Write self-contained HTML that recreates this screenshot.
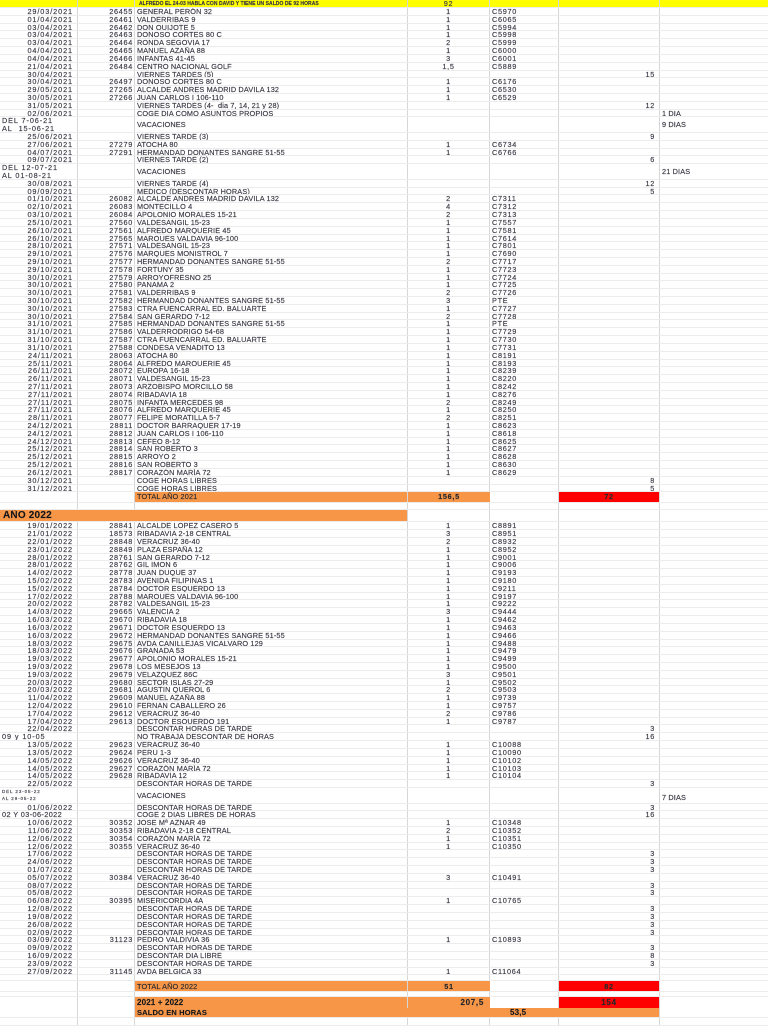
<!DOCTYPE html>
<html><head><meta charset="utf-8">
<style>
*{margin:0;padding:0;box-sizing:border-box}
body{width:768px;height:1024px;overflow:hidden;background:#fff;font-family:"Liberation Sans",sans-serif;color:#383844;font-size:7.3px}
.r{display:grid;grid-template-columns:78px 57px 273px 82px 69px 101px 108px;height:7.82px;line-height:7.82px;border-bottom:1px solid #ececec}
.r>x{display:block;border-right:1px solid #d6d6d6;white-space:nowrap;overflow:hidden;letter-spacing:.15px;-webkit-text-stroke:.15px #383844}
.r>x:nth-child(1){text-align:right;padding-right:4px;letter-spacing:.9px}
.r>x:nth-child(2){text-align:right;padding-right:1px;letter-spacing:.7px}
.r>x:nth-child(3){padding-left:2px}
.r>x:nth-child(4){text-align:center;letter-spacing:.7px}
.r>x:nth-child(5){padding-left:2px;letter-spacing:.7px}
.r>x:nth-child(6){text-align:right;padding-right:4px;letter-spacing:.7px}
.r>x:nth-child(7){padding-left:2px;border-right:none}
.d{height:15.6px;line-height:15.6px}
.d>x:nth-child(1){text-align:left!important;line-height:7.5px;padding-left:2px!important}
.sm>x:nth-child(1){font-size:4.5px;line-height:7.5px}
.o{background:#f79646!important;color:#222}
.rd{background:#ff0000!important;color:#222}
.bd{font-weight:bold}
</style></head><body>
<div class="r" style="height:8px;line-height:8px;background:#ffff00"><x></x><x></x><x style="font-size:5px;font-weight:bold;letter-spacing:.05px;padding-left:4px">ALFREDO EL 24-03 HABLA CON DAVID Y TIENE UN SALDO DE 92 HORAS</x><x>92</x><x></x><x></x><x></x></div>
<div class="r"><x>29/03/2021</x><x>26455</x><x>GENERAL PERÓN 32</x><x>1</x><x>C5970</x><x></x><x></x></div>
<div class="r"><x>01/04/2021</x><x>26461</x><x>VALDERRIBAS 9</x><x>1</x><x>C6065</x><x></x><x></x></div>
<div class="r"><x>03/04/2021</x><x>26462</x><x>DON QUIJOTE 5</x><x>1</x><x>C5994</x><x></x><x></x></div>
<div class="r"><x>03/04/2021</x><x>26463</x><x>DONOSO CORTES 80 C</x><x>1</x><x>C5998</x><x></x><x></x></div>
<div class="r"><x>03/04/2021</x><x>26464</x><x>RONDA SEGOVIA 17</x><x>2</x><x>C5999</x><x></x><x></x></div>
<div class="r"><x>04/04/2021</x><x>26465</x><x>MANUEL AZAÑA 88</x><x>1</x><x>C6000</x><x></x><x></x></div>
<div class="r"><x>04/04/2021</x><x>26466</x><x>INFANTAS 41-45</x><x>3</x><x>C6001</x><x></x><x></x></div>
<div class="r"><x>21/04/2021</x><x>26484</x><x>CENTRO NACIONAL GOLF</x><x>1,5</x><x>C5889</x><x></x><x></x></div>
<div class="r"><x>30/04/2021</x><x></x><x>VIERNES TARDES (5)</x><x></x><x></x><x>15</x><x></x></div>
<div class="r"><x>30/04/2021</x><x>26497</x><x>DONOSO CORTES 80 C</x><x>1</x><x>C6176</x><x></x><x></x></div>
<div class="r"><x>29/05/2021</x><x>27265</x><x>ALCALDE ANDRES MADRID DAVILA 132</x><x>1</x><x>C6530</x><x></x><x></x></div>
<div class="r"><x>30/05/2021</x><x>27266</x><x>JUAN CARLOS I 106-110</x><x>1</x><x>C6529</x><x></x><x></x></div>
<div class="r"><x>31/05/2021</x><x></x><x>VIERNES TARDES (4-&nbsp; dia 7, 14, 21 y 28)</x><x></x><x></x><x>12</x><x></x></div>
<div class="r"><x>02/06/2021</x><x></x><x>COGE DIA COMO ASUNTOS PROPIOS</x><x></x><x></x><x></x><x>1 DIA</x></div>
<div class="r d"><x>DEL 7-06-21<br>AL&nbsp; 15-06-21</x><x></x><x>VACACIONES</x><x></x><x></x><x></x><x>9 DIAS</x></div>
<div class="r"><x>25/06/2021</x><x></x><x>VIERNES TARDE (3)</x><x></x><x></x><x>9</x><x></x></div>
<div class="r"><x>27/06/2021</x><x>27279</x><x>ATOCHA 80</x><x>1</x><x>C6734</x><x></x><x></x></div>
<div class="r"><x>04/07/2021</x><x>27291</x><x>HERMANDAD DONANTES SANGRE 51-55</x><x>1</x><x>C6766</x><x></x><x></x></div>
<div class="r"><x>09/07/2021</x><x></x><x>VIERNES TARDE (2)</x><x></x><x></x><x>6</x><x></x></div>
<div class="r d"><x>DEL 12-07-21<br>AL 01-08-21</x><x></x><x>VACACIONES</x><x></x><x></x><x></x><x>21 DIAS</x></div>
<div class="r"><x>30/08/2021</x><x></x><x>VIERNES TARDE (4)</x><x></x><x></x><x>12</x><x></x></div>
<div class="r"><x>09/09/2021</x><x></x><x>MEDICO (DESCONTAR HORAS)</x><x></x><x></x><x>5</x><x></x></div>
<div class="r"><x>01/10/2021</x><x>26082</x><x>ALCALDE ANDRES MADRID DAVILA 132</x><x>2</x><x>C7311</x><x></x><x></x></div>
<div class="r"><x>02/10/2021</x><x>26083</x><x>MONTECILLO 4</x><x>4</x><x>C7312</x><x></x><x></x></div>
<div class="r"><x>03/10/2021</x><x>26084</x><x>APOLONIO MORALES 15-21</x><x>2</x><x>C7313</x><x></x><x></x></div>
<div class="r"><x>25/10/2021</x><x>27560</x><x>VALDESANGIL 15-23</x><x>1</x><x>C7557</x><x></x><x></x></div>
<div class="r"><x>26/10/2021</x><x>27561</x><x>ALFREDO MARQUERIE 45</x><x>1</x><x>C7581</x><x></x><x></x></div>
<div class="r"><x>26/10/2021</x><x>27565</x><x>MARQUES VALDAVIA 96-100</x><x>1</x><x>C7614</x><x></x><x></x></div>
<div class="r"><x>28/10/2021</x><x>27571</x><x>VALDESANGIL 15-23</x><x>1</x><x>C7801</x><x></x><x></x></div>
<div class="r"><x>29/10/2021</x><x>27576</x><x>MARQUES MONISTROL 7</x><x>1</x><x>C7690</x><x></x><x></x></div>
<div class="r"><x>29/10/2021</x><x>27577</x><x>HERMANDAD DONANTES SANGRE 51-55</x><x>2</x><x>C7717</x><x></x><x></x></div>
<div class="r"><x>29/10/2021</x><x>27578</x><x>FORTUNY 35</x><x>1</x><x>C7723</x><x></x><x></x></div>
<div class="r"><x>30/10/2021</x><x>27579</x><x>ARROYOFRESNO 25</x><x>1</x><x>C7724</x><x></x><x></x></div>
<div class="r"><x>30/10/2021</x><x>27580</x><x>PANAMA 2</x><x>1</x><x>C7725</x><x></x><x></x></div>
<div class="r"><x>30/10/2021</x><x>27581</x><x>VALDERRIBAS 9</x><x>2</x><x>C7726</x><x></x><x></x></div>
<div class="r"><x>30/10/2021</x><x>27582</x><x>HERMANDAD DONANTES SANGRE 51-55</x><x>3</x><x>PTE</x><x></x><x></x></div>
<div class="r"><x>30/10/2021</x><x>27583</x><x>CTRA FUENCARRAL ED. BALUARTE</x><x>1</x><x>C7727</x><x></x><x></x></div>
<div class="r"><x>30/10/2021</x><x>27584</x><x>SAN GERARDO 7-12</x><x>2</x><x>C7728</x><x></x><x></x></div>
<div class="r"><x>31/10/2021</x><x>27585</x><x>HERMANDAD DONANTES SANGRE 51-55</x><x>1</x><x>PTE</x><x></x><x></x></div>
<div class="r"><x>31/10/2021</x><x>27586</x><x>VALDERRODRIGO 54-68</x><x>1</x><x>C7729</x><x></x><x></x></div>
<div class="r"><x>31/10/2021</x><x>27587</x><x>CTRA FUENCARRAL ED. BALUARTE</x><x>1</x><x>C7730</x><x></x><x></x></div>
<div class="r"><x>31/10/2021</x><x>27588</x><x>CONDESA VENADITO 13</x><x>1</x><x>C7731</x><x></x><x></x></div>
<div class="r"><x>24/11/2021</x><x>28063</x><x>ATOCHA 80</x><x>1</x><x>C8191</x><x></x><x></x></div>
<div class="r"><x>25/11/2021</x><x>28064</x><x>ALFREDO MARQUERIE 45</x><x>1</x><x>C8193</x><x></x><x></x></div>
<div class="r"><x>26/11/2021</x><x>28072</x><x>EUROPA 16-18</x><x>1</x><x>C8239</x><x></x><x></x></div>
<div class="r"><x>26/11/2021</x><x>28071</x><x>VALDESANGIL 15-23</x><x>1</x><x>C8220</x><x></x><x></x></div>
<div class="r"><x>27/11/2021</x><x>28073</x><x>ARZOBISPO MORCILLO 58</x><x>1</x><x>C8242</x><x></x><x></x></div>
<div class="r"><x>27/11/2021</x><x>28074</x><x>RIBADAVIA 18</x><x>1</x><x>C8276</x><x></x><x></x></div>
<div class="r"><x>27/11/2021</x><x>28075</x><x>INFANTA MERCEDES 98</x><x>2</x><x>C8249</x><x></x><x></x></div>
<div class="r"><x>27/11/2021</x><x>28076</x><x>ALFREDO MARQUERIE 45</x><x>1</x><x>C8250</x><x></x><x></x></div>
<div class="r"><x>28/11/2021</x><x>28077</x><x>FELIPE MORATILLA 5-7</x><x>2</x><x>C8251</x><x></x><x></x></div>
<div class="r"><x>24/12/2021</x><x>28811</x><x>DOCTOR BARRAQUER 17-19</x><x>1</x><x>C8623</x><x></x><x></x></div>
<div class="r"><x>24/12/2021</x><x>28812</x><x>JUAN CARLOS I 106-110</x><x>1</x><x>C8618</x><x></x><x></x></div>
<div class="r"><x>24/12/2021</x><x>28813</x><x>CEFEO 8-12</x><x>1</x><x>C8625</x><x></x><x></x></div>
<div class="r"><x>25/12/2021</x><x>28814</x><x>SAN ROBERTO 3</x><x>1</x><x>C8627</x><x></x><x></x></div>
<div class="r"><x>25/12/2021</x><x>28815</x><x>ARROYO 2</x><x>1</x><x>C8628</x><x></x><x></x></div>
<div class="r"><x>25/12/2021</x><x>28816</x><x>SAN ROBERTO 3</x><x>1</x><x>C8630</x><x></x><x></x></div>
<div class="r"><x>26/12/2021</x><x>28817</x><x>CORAZÓN MARÍA 72</x><x>1</x><x>C8629</x><x></x><x></x></div>
<div class="r"><x>30/12/2021</x><x></x><x>COGE HORAS LIBRES</x><x></x><x></x><x>8</x><x></x></div>
<div class="r"><x>31/12/2021</x><x></x><x>COGE HORAS LIBRES</x><x></x><x></x><x>5</x><x></x></div>
<div class="r" style="height:11px;line-height:10px"><x></x><x></x><x class="o">TOTAL AÑO 2021</x><x class="o bd" style="border-right:none">156,5</x><x></x><x class="rd bd" style="text-align:center;padding:0">72</x><x></x></div>
<div class="r" style="height:7px"><x></x><x></x><x></x><x></x><x></x><x></x><x></x></div>
<div class="r" style="grid-template-columns:408px 82px 69px 101px 108px;height:12px;line-height:12px"><x class="o bd" style="text-align:left;padding-left:3px;font-size:10px;letter-spacing:.2px;color:#111">AÑO 2022</x><x></x><x></x><x></x><x style="border-right:none"></x></div>
<div class="r"><x>19/01/2022</x><x>28841</x><x>ALCALDE LOPEZ CASERO 5</x><x>1</x><x>C8891</x><x></x><x></x></div>
<div class="r"><x>21/01/2022</x><x>18573</x><x>RIBADAVIA 2-18 CENTRAL</x><x>3</x><x>C8951</x><x></x><x></x></div>
<div class="r"><x>22/01/2022</x><x>28848</x><x>VERACRUZ 36-40</x><x>2</x><x>C8932</x><x></x><x></x></div>
<div class="r"><x>23/01/2022</x><x>28849</x><x>PLAZA ESPAÑA 12</x><x>1</x><x>C8952</x><x></x><x></x></div>
<div class="r"><x>28/01/2022</x><x>28761</x><x>SAN GERARDO 7-12</x><x>1</x><x>C9001</x><x></x><x></x></div>
<div class="r"><x>28/01/2022</x><x>28762</x><x>GIL IMON 6</x><x>1</x><x>C9006</x><x></x><x></x></div>
<div class="r"><x>14/02/2022</x><x>28778</x><x>JUAN DUQUE 37</x><x>1</x><x>C9193</x><x></x><x></x></div>
<div class="r"><x>15/02/2022</x><x>28783</x><x>AVENIDA FILIPINAS 1</x><x>1</x><x>C9180</x><x></x><x></x></div>
<div class="r"><x>15/02/2022</x><x>28784</x><x>DOCTOR ESQUERDO 13</x><x>1</x><x>C9211</x><x></x><x></x></div>
<div class="r"><x>17/02/2022</x><x>28788</x><x>MARQUES VALDAVIA 96-100</x><x>1</x><x>C9197</x><x></x><x></x></div>
<div class="r"><x>20/02/2022</x><x>28782</x><x>VALDESANGIL 15-23</x><x>1</x><x>C9222</x><x></x><x></x></div>
<div class="r"><x>14/03/2022</x><x>29665</x><x>VALENCIA 2</x><x>3</x><x>C9444</x><x></x><x></x></div>
<div class="r"><x>16/03/2022</x><x>29670</x><x>RIBADAVIA 18</x><x>1</x><x>C9462</x><x></x><x></x></div>
<div class="r"><x>16/03/2022</x><x>29671</x><x>DOCTOR ESQUERDO 13</x><x>1</x><x>C9463</x><x></x><x></x></div>
<div class="r"><x>16/03/2022</x><x>29672</x><x>HERMANDAD DONANTES SANGRE 51-55</x><x>1</x><x>C9466</x><x></x><x></x></div>
<div class="r"><x>18/03/2022</x><x>29675</x><x>AVDA CANILLEJAS VICALVARO 129</x><x>1</x><x>C9488</x><x></x><x></x></div>
<div class="r"><x>18/03/2022</x><x>29676</x><x>GRANADA 53</x><x>1</x><x>C9479</x><x></x><x></x></div>
<div class="r"><x>19/03/2022</x><x>29677</x><x>APOLONIO MORALES 15-21</x><x>1</x><x>C9499</x><x></x><x></x></div>
<div class="r"><x>19/03/2022</x><x>29678</x><x>LOS MESEJOS 13</x><x>1</x><x>C9500</x><x></x><x></x></div>
<div class="r"><x>19/03/2022</x><x>29679</x><x>VELAZQUEZ 86C</x><x>3</x><x>C9501</x><x></x><x></x></div>
<div class="r"><x>20/03/2022</x><x>29680</x><x>SECTOR ISLAS 27-29</x><x>1</x><x>C9502</x><x></x><x></x></div>
<div class="r"><x>20/03/2022</x><x>29681</x><x>AGUSTIN QUEROL 6</x><x>2</x><x>C9503</x><x></x><x></x></div>
<div class="r"><x>11/04/2022</x><x>29609</x><x>MANUEL AZAÑA 88</x><x>1</x><x>C9739</x><x></x><x></x></div>
<div class="r"><x>12/04/2022</x><x>29610</x><x>FERNAN CABALLERO 26</x><x>1</x><x>C9757</x><x></x><x></x></div>
<div class="r"><x>17/04/2022</x><x>29612</x><x>VERACRUZ 36-40</x><x>2</x><x>C9786</x><x></x><x></x></div>
<div class="r"><x>17/04/2022</x><x>29613</x><x>DOCTOR ESQUERDO 191</x><x>1</x><x>C9787</x><x></x><x></x></div>
<div class="r"><x>22/04/2022</x><x></x><x>DESCONTAR HORAS DE TARDE</x><x></x><x></x><x>3</x><x></x></div>
<div class="r"><x style="text-align:left;padding-left:2px">09 y 10-05</x><x></x><x>NO TRABAJA DESCONTAR DE HORAS</x><x></x><x></x><x>16</x><x></x></div>
<div class="r"><x>13/05/2022</x><x>29623</x><x>VERACRUZ 36-40</x><x>1</x><x>C10088</x><x></x><x></x></div>
<div class="r"><x>13/05/2022</x><x>29624</x><x>PERU 1-3</x><x>1</x><x>C10090</x><x></x><x></x></div>
<div class="r"><x>14/05/2022</x><x>29626</x><x>VERACRUZ 36-40</x><x>1</x><x>C10102</x><x></x><x></x></div>
<div class="r"><x>14/05/2022</x><x>29627</x><x>CORAZÓN MARÍA 72</x><x>1</x><x>C10103</x><x></x><x></x></div>
<div class="r"><x>14/05/2022</x><x>29628</x><x>RIBADAVIA 12</x><x>1</x><x>C10104</x><x></x><x></x></div>
<div class="r"><x>22/05/2022</x><x></x><x>DESCONTAR HORAS DE TARDE</x><x></x><x></x><x>3</x><x></x></div>
<div class="r d sm"><x>DEL 23-05-22<br>AL 29-05-22</x><x></x><x>VACACIONES</x><x></x><x></x><x></x><x style="line-height:20px">7 DIAS</x></div>
<div class="r"><x>01/06/2022</x><x></x><x>DESCONTAR HORAS DE TARDE</x><x></x><x></x><x>3</x><x></x></div>
<div class="r"><x style="text-align:left;padding-left:2px;letter-spacing:.4px">02 Y 03-06-2022</x><x></x><x>COGE 2 DIAS LIBRES DE HORAS</x><x></x><x></x><x>16</x><x></x></div>
<div class="r"><x>10/06/2022</x><x>30352</x><x>JOSE Mª AZNAR 49</x><x>1</x><x>C10348</x><x></x><x></x></div>
<div class="r"><x>11/06/2022</x><x>30353</x><x>RIBADAVIA 2-18 CENTRAL</x><x>2</x><x>C10352</x><x></x><x></x></div>
<div class="r"><x>12/06/2022</x><x>30354</x><x>CORAZÓN MARÍA 72</x><x>1</x><x>C10351</x><x></x><x></x></div>
<div class="r"><x>12/06/2022</x><x>30355</x><x>VERACRUZ 36-40</x><x>1</x><x>C10350</x><x></x><x></x></div>
<div class="r"><x>17/06/2022</x><x></x><x>DESCONTAR HORAS DE TARDE</x><x></x><x></x><x>3</x><x></x></div>
<div class="r"><x>24/06/2022</x><x></x><x>DESCONTAR HORAS DE TARDE</x><x></x><x></x><x>3</x><x></x></div>
<div class="r"><x>01/07/2022</x><x></x><x>DESCONTAR HORAS DE TARDE</x><x></x><x></x><x>3</x><x></x></div>
<div class="r"><x>05/07/2022</x><x>30384</x><x>VERACRUZ 36-40</x><x>3</x><x>C10491</x><x></x><x></x></div>
<div class="r"><x>08/07/2022</x><x></x><x>DESCONTAR HORAS DE TARDE</x><x></x><x></x><x>3</x><x></x></div>
<div class="r"><x>05/08/2022</x><x></x><x>DESCONTAR HORAS DE TARDE</x><x></x><x></x><x>3</x><x></x></div>
<div class="r"><x>06/08/2022</x><x>30395</x><x>MISERICORDIA 4A</x><x>1</x><x>C10765</x><x></x><x></x></div>
<div class="r"><x>12/08/2022</x><x></x><x>DESCONTAR HORAS DE TARDE</x><x></x><x></x><x>3</x><x></x></div>
<div class="r"><x>19/08/2022</x><x></x><x>DESCONTAR HORAS DE TARDE</x><x></x><x></x><x>3</x><x></x></div>
<div class="r"><x>26/08/2022</x><x></x><x>DESCONTAR HORAS DE TARDE</x><x></x><x></x><x>3</x><x></x></div>
<div class="r"><x>02/09/2022</x><x></x><x>DESCONTAR HORAS DE TARDE</x><x></x><x></x><x>3</x><x></x></div>
<div class="r"><x>03/09/2022</x><x>31123</x><x>PEDRO VALDIVIA 36</x><x>1</x><x>C10893</x><x></x><x></x></div>
<div class="r"><x>09/09/2022</x><x></x><x>DESCONTAR HORAS DE TARDE</x><x></x><x></x><x>3</x><x></x></div>
<div class="r"><x>16/09/2022</x><x></x><x>DESCONTAR DIA LIBRE</x><x></x><x></x><x>8</x><x></x></div>
<div class="r"><x>23/09/2022</x><x></x><x>DESCONTAR HORAS DE TARDE</x><x></x><x></x><x>3</x><x></x></div>
<div class="r"><x>27/09/2022</x><x>31145</x><x>AVDA BELGICA 33</x><x>1</x><x>C11064</x><x></x><x></x></div>
<div class="r" style="height:6px"><x></x><x></x><x></x><x></x><x></x><x></x><x></x></div>
<div class="r" style="height:11px;line-height:11px"><x></x><x></x><x class="o">TOTAL AÑO 2022</x><x class="o bd" style="border-right:none">51</x><x></x><x class="rd bd" style="text-align:center;padding:0">82</x><x></x></div>
<div class="r" style="height:5px"><x></x><x></x><x></x><x></x><x></x><x></x><x></x></div>
<div class="r" style="height:11px;line-height:11px;border-bottom:none"><x></x><x></x><x class="o bd" style="font-size:8px;color:#111">2021 + 2022</x><x class="o bd" style="border-right:none;text-align:right;padding-right:6px;font-size:8px">207,5</x><x></x><x class="rd bd" style="text-align:center;padding:0;font-size:8px">154</x><x></x></div>
<div class="r" style="grid-template-columns:78px 57px 525px 108px;height:10px;line-height:10px"><x></x><x></x><x class="o bd" style="font-size:7.5px;color:#111;padding-left:2px">SALDO EN HORAS<span style="position:absolute;left:510px;font-size:8px">53,5</span></x><x style="border-right:none;text-align:left"></x></div>
<div class="r"><x></x><x></x><x></x><x></x><x></x><x></x><x></x></div>
</body></html>
